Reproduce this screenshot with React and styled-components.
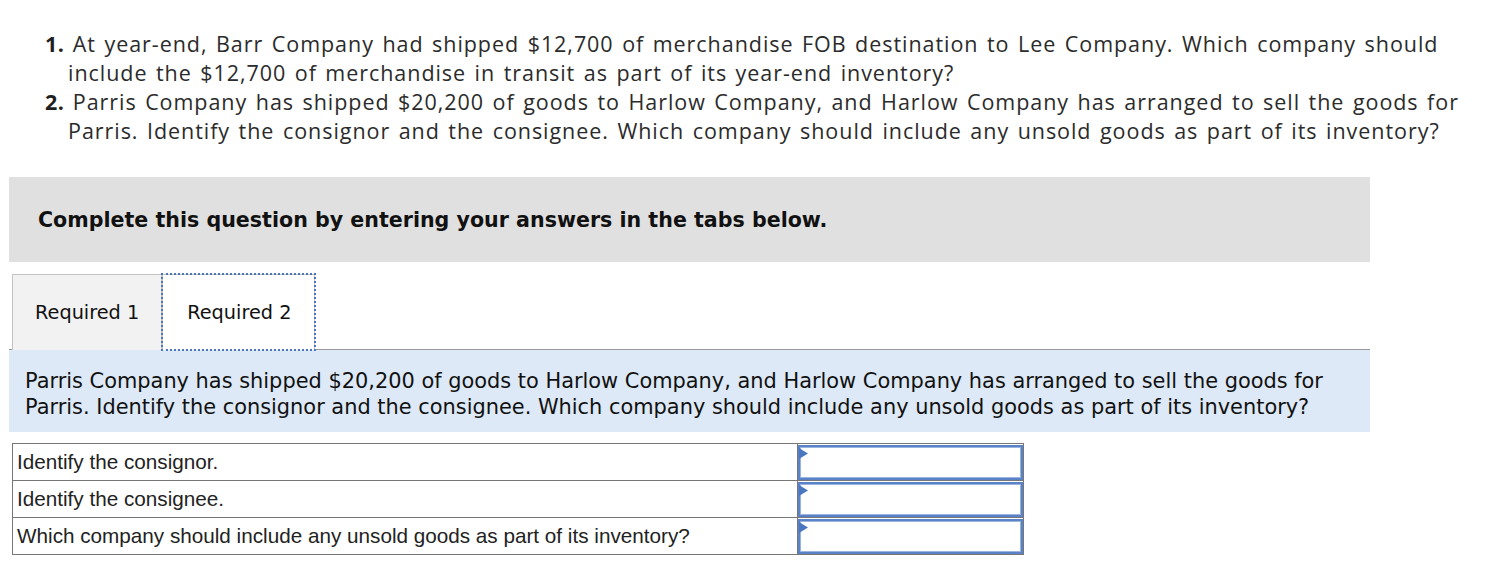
import React from 'react';
import styled, { createGlobalStyle } from 'styled-components';

const GlobalStyle = createGlobalStyle`
  body {
    margin: 0;
    background: #fff;
  }
`;

const Page = styled.div`
  padding: 29px 0 0 9px;
  width: 1361px;
`;

const QuestionList = styled.ol`
  list-style: none;
  margin: 0 0 32px 0;
  padding: 0 0 0 36px;
  font-family: "Open Sans", Lato, sans-serif;
  font-size: 21.5px;
  letter-spacing: 0.95px;
  word-spacing: 2px;
  line-height: 29px;
  color: #2b2b2b;
  white-space: nowrap;
`;

const QuestionItem = styled.li`
  b {
    font-weight: 700;
    color: #1f1f1f;
    letter-spacing: 0.4px;
  }
`;

const Cont = styled.span`
  padding-left: 23px;
`;

const Banner = styled.div`
  background: #e0e0e0;
  height: 85px;
  display: flex;
  align-items: center;
  padding-left: 29px;
  font-family: "DejaVu Sans", Verdana, sans-serif;
  font-weight: bold;
  font-size: 20.6px;
  color: #111;
`;

const TabBar = styled.div`
  display: flex;
  margin-top: 12px;
  padding-left: 3px;
  border-bottom: 1px solid #9a9a9a;
`;

const Tab = styled.div`
  height: 76px;
  display: flex;
  align-items: center;
  padding: 0 ${p => (p.$active ? 23 : 22)}px 0 ${p => (p.$active ? 24 : 22)}px;
  font-family: "DejaVu Sans", Verdana, sans-serif;
  font-size: 19.3px;
  color: #111;
  background: ${p => (p.$active ? '#fff' : '#f2f2f2')};
  border: 1px solid #c4c4c4;
  border-bottom: none;
  outline: ${p => (p.$active ? '2px dotted #4a77c0' : 'none')};
  outline-offset: -1px;
  margin-bottom: -1px;
  box-sizing: border-box;
`;

const Prompt = styled.div`
  background: #dde9f6;
  height: 82px;
  box-sizing: border-box;
  padding: 18px 0 0 16px;
  font-family: "DejaVu Sans", Verdana, sans-serif;
  font-size: 20.9px;
  line-height: 26px;
  color: #111;
  white-space: nowrap;
`;

const AnswerTable = styled.table`
  margin: 11px 0 0 3px;
  border-collapse: collapse;
  font-family: "Liberation Sans", Arial, sans-serif;
  font-size: 20.7px;
  color: #222;
`;

const LabelCell = styled.td`
  width: 785px;
  height: 37px;
  box-sizing: border-box;
  padding: 0 4px;
  border: 1px solid #777;
  vertical-align: middle;
`;

const InputCell = styled.td`
  width: 225px;
  padding: 0;
  border: 1px solid #777;
`;

const AnswerBox = styled.div`
  position: relative;
  height: 35px;
  box-sizing: border-box;
  border: 2px solid #5a82c6;
  box-shadow: inset 0 0 0 1px #9ab4e0;
  background: #fff;
`;

const Marker = styled.svg`
  position: absolute;
  left: -1px;
  top: 1px;
`;

const rows = [
  'Identify the consignor.',
  'Identify the consignee.',
  'Which company should include any unsold goods as part of its inventory?',
];

export default function App() {
  return (
    <>
      <GlobalStyle />
      <Page>
        <QuestionList>
          <QuestionItem>
            <b>1.</b> At year-end, Barr Company had shipped $12,700 of merchandise FOB destination to Lee Company. Which company should
            <br />
            <Cont>include the $12,700 of merchandise in transit as part of its year-end inventory?</Cont>
          </QuestionItem>
          <QuestionItem>
            <b>2.</b> Parris Company has shipped $20,200 of goods to Harlow Company, and Harlow Company has arranged to sell the goods for
            <br />
            <Cont>Parris. Identify the consignor and the consignee. Which company should include any unsold goods as part of its inventory?</Cont>
          </QuestionItem>
        </QuestionList>

        <Banner>Complete this question by entering your answers in the tabs below.</Banner>

        <TabBar>
          <Tab>Required 1</Tab>
          <Tab $active>Required 2</Tab>
        </TabBar>

        <Prompt>
          Parris Company has shipped $20,200 of goods to Harlow Company, and Harlow Company has arranged to sell the goods for
          <br />
          Parris. Identify the consignor and the consignee. Which company should include any unsold goods as part of its inventory?
        </Prompt>

        <AnswerTable>
          <tbody>
            {rows.map(r => (
              <tr key={r}>
                <LabelCell>{r}</LabelCell>
                <InputCell>
                  <AnswerBox>
                    <Marker width="9" height="11" viewBox="0 0 9 11">
                      <polygon points="0,0 9,5.5 0,11" fill="#4a77c0" />
                    </Marker>
                  </AnswerBox>
                </InputCell>
              </tr>
            ))}
          </tbody>
        </AnswerTable>
      </Page>
    </>
  );
}
